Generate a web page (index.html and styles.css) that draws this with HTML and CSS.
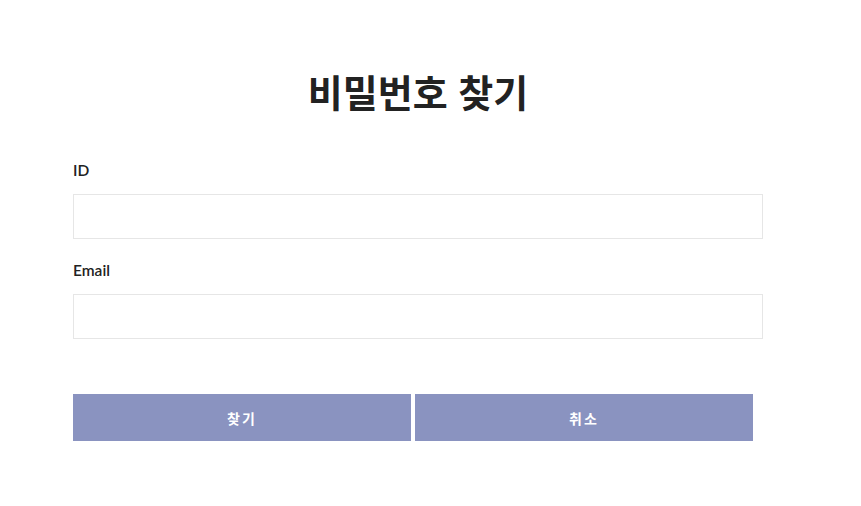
FILE: index.html
```html
<!DOCTYPE html>
<html lang="ko">
<head>
<meta charset="utf-8">
<title>비밀번호 찾기</title>
<link rel="stylesheet" href="styles.css">
</head>
<body>
<div class="wrap">
  <h1 class="title">비밀번호 찾기</h1>
  <form class="form">
    <div class="field">
      <label class="label" for="uid">ID</label>
      <input class="input" id="uid" type="text">
    </div>
    <div class="field">
      <label class="label" for="email">Email</label>
      <input class="input" id="email" type="email">
    </div>
    <div class="actions">
      <button class="btn" type="submit">찾기</button>
      <button class="btn" type="button">취소</button>
    </div>
  </form>
</div>
</body>
</html>
```
FILE: styles.css
```css
html, body {
  margin: 0;
  padding: 0;
  background: #fff;
}
body {
  font-family: "Noto Sans", "Noto Sans CJK KR", sans-serif;
  color: #222;
}
.wrap {
  width: 690px;
  margin-left: 73px;
  padding-top: 68px;
}
.title {
  margin: 0;
  font-family: "Noto Sans CJK KR", sans-serif;
  font-size: 38px;
  line-height: 46px;
  font-weight: 700;
  text-align: center;
  color: #222;
}
.form {
  margin-top: 46px;
  display: flex;
  flex-direction: column;
}
.field {
  display: flex;
  flex-direction: column;
  margin-bottom: 21px;
}
.label {
  font-family: "Lato", "Noto Sans", sans-serif;
  font-size: 15.5px;
  font-weight: 600;
  line-height: 20px;
  color: #222;
  margin-bottom: 14px;
}
.input {
  box-sizing: border-box;
  width: 690px;
  height: 45px;
  border: 1px solid #e6e6e6;
  margin: 0;
  padding: 0 10px;
  outline: none;
  background: #fff;
}
.actions {
  margin-top: 34px;
  display: flex;
  gap: 4px;
}
.btn {
  width: 338px;
  height: 47px;
  border: 0;
  margin: 0;
  padding: 0;
  background: #8a93c0;
  color: #fff;
  font-family: "Noto Sans CJK KR", sans-serif;
  font-size: 14px;
  font-weight: 700;
  letter-spacing: 2px;
}
```
